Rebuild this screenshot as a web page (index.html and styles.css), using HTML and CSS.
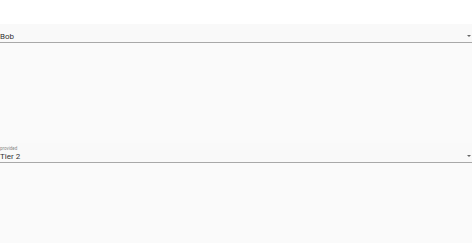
FILE: index.html
```html
<!DOCTYPE html>
<html>
<head>
<meta charset="utf-8">
<link rel="stylesheet" href="styles.css">
</head>
<body>
<div class="page">
  <div class="field">
    <div class="select">
      <span class="value">Bob</span>
      <span class="arrow"></span>
    </div>
    <div class="panel tall"></div>
  </div>
  <div class="field">
    <div class="select labeled">
      <span class="label">provided</span>
      <span class="value">Tier 2</span>
      <span class="arrow"></span>
    </div>
    <div class="panel short"></div>
  </div>
</div>
</body>
</html>
```
FILE: styles.css
```css
html, body {
  margin: 0;
  padding: 0;
  background: #ffffff;
  font-family: Roboto, "Liberation Sans", Arial, sans-serif;
}
.page {
  padding-top: 24px;
  width: 472px;
}
.field {
  display: flex;
  flex-direction: column;
}
.select {
  position: relative;
  background: #f9f9f9;
  height: 18px;
  border-bottom: 1px solid #a8a8a8;
  display: flex;
  flex-direction: column;
  justify-content: flex-end;
  box-sizing: content-box;
}
.select.labeled {
  height: 19px;
}
.value {
  font-size: 8px;
  line-height: 10px;
  color: #333;
}
.label {
  font-size: 4.5px;
  line-height: 6px;
  color: #888;
}
.arrow {
  position: absolute;
  right: 1px;
  bottom: 5px;
  width: 0;
  height: 0;
  border-left: 2.5px solid transparent;
  border-right: 2.5px solid transparent;
  border-top: 2.5px solid #666;
}
.panel {
  background: #fafafa;
}
.panel.tall {
  height: 100px;
}
.panel.short {
  height: 80px;
}
```
